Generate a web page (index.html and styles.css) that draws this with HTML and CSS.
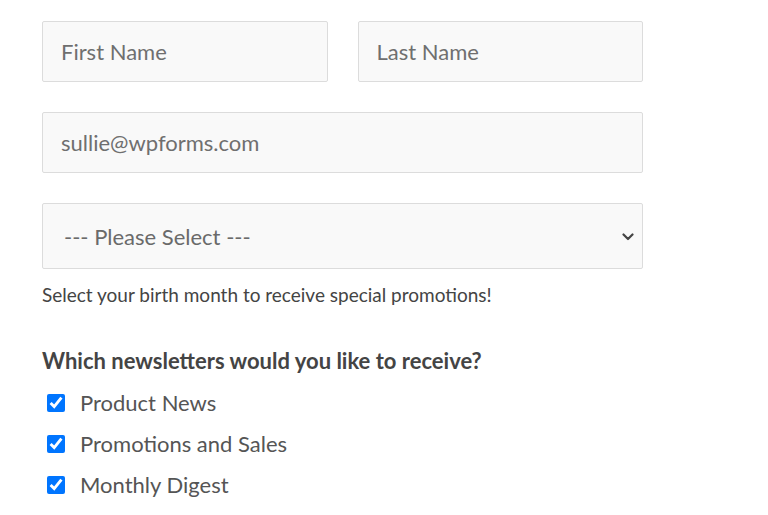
FILE: index.html
```html
<!DOCTYPE html>
<html>
<head>
<meta charset="utf-8">
<link rel="stylesheet" href="styles.css">
</head>
<body>
<form class="form">
  <div class="row">
    <input class="field" type="text" placeholder="First Name">
    <input class="field" type="text" placeholder="Last Name">
  </div>
  <input class="field full" type="email" placeholder="sullie@wpforms.com">
  <div class="select-wrap">
    <select class="field select">
      <option>--- Please Select ---</option>
    </select>
    <svg class="chev" width="12" height="8" viewBox="0 0 12 8"><path d="M1.5 1.5 L6 6 L10.5 1.5" fill="none" stroke="#444" stroke-width="2.2" stroke-linecap="round" stroke-linejoin="round"/></svg>
  </div>
  <p class="help">Select your birth month to receive special promotions!</p>
  <h3 class="label">Which newsletters would you like to receive?</h3>
  <ul class="checks">
    <li><label><input type="checkbox" checked> <span>Product News</span></label></li>
    <li><label><input type="checkbox" checked> <span>Promotions and Sales</span></label></li>
    <li><label><input type="checkbox" checked> <span>Monthly Digest</span></label></li>
  </ul>
</form>
</body>
</html>
```

FILE: styles.css
```css
* { box-sizing: border-box; }
body {
  margin: 0;
  background: #fff;
  font-family: Lato, "Open Sans", sans-serif;
  color: #444;
}
.form {
  width: 601px;
  margin: 21px 0 0 42px;
  display: flex;
  flex-direction: column;
}
.row {
  display: flex;
  gap: 30px;
  margin-bottom: 30px;
}
.field {
  height: 61px;
  background: #f9f9f9;
  border: 1px solid #dcdcdc;
  border-radius: 2px;
  padding: 0 18px;
  font-family: Lato, sans-serif;
  font-size: 22px;
  color: #666;
  outline: none;
}
.row .field { flex: 1; width: 0; }
.field::placeholder { color: #6f6f6f; }
.full { width: 100%; margin-bottom: 30px; }
.select-wrap { position: relative; }
.select {
  width: 100%;
  height: 66px;
  appearance: none;
  -webkit-appearance: none;
  padding: 0 21px;
  color: #6a6a6a;
}
.chev {
  position: absolute;
  right: 9px;
  top: 30px;
}
.help {
  margin: 15px 0 0;
  font-size: 19px;
  line-height: 22px;
  color: #444;
}
.label {
  margin: 41px 0 0;
  font-size: 22px;
  line-height: 28px;
  font-weight: 700;
  color: #444;
}
.checks {
  list-style: none;
  margin: 7px 0 0;
  padding: 0;
}
.checks li {
  height: 41px;
  display: flex;
  align-items: center;
}
.checks label {
  display: flex;
  align-items: center;
  font-size: 22px;
  color: #555;
}
.checks input {
  width: 18px;
  height: 18px;
  margin: 0 15px 0 5px;
  accent-color: #0075ff;
}
```
